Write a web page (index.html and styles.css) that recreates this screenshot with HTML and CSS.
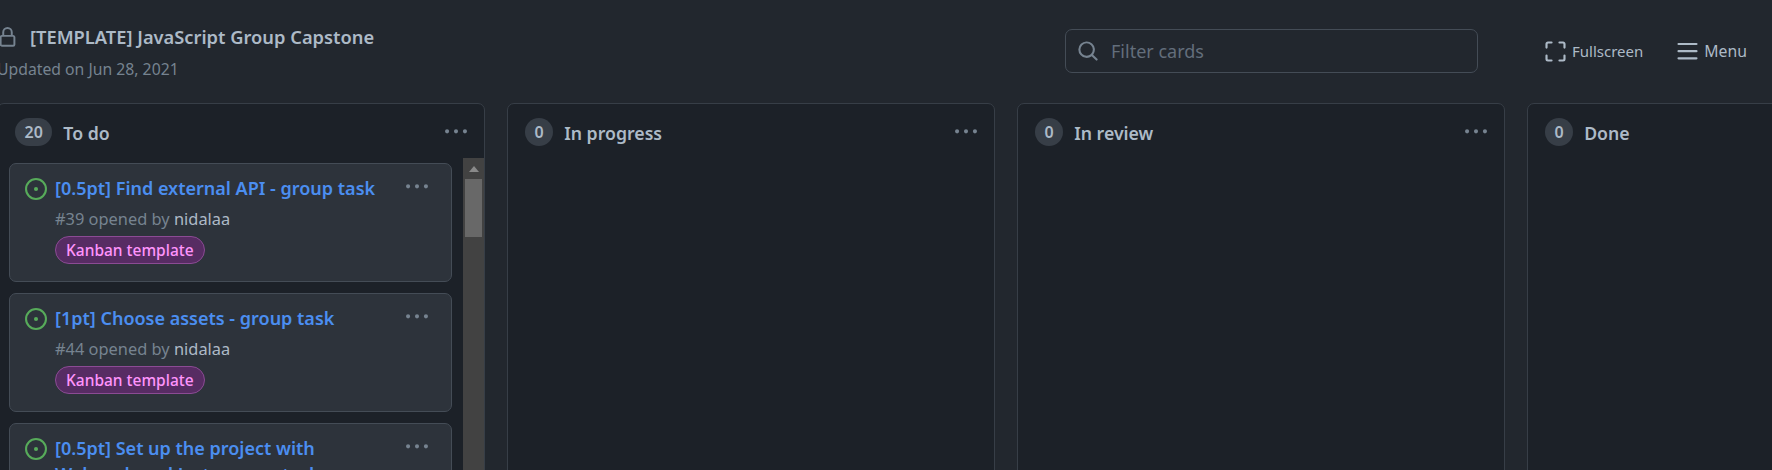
FILE: index.html
```html
<!DOCTYPE html>
<html lang="en">
<head>
<meta charset="utf-8">
<title>[TEMPLATE] JavaScript Group Capstone</title>
<link rel="stylesheet" href="styles.css">
</head>
<body>
<svg class="defs" aria-hidden="true">
  <symbol id="i-lock" viewBox="0 0 16 16"><path d="M4 4a4 4 0 0 1 8 0v2h.25c.966 0 1.75.784 1.75 1.75v5.5A1.75 1.75 0 0 1 12.25 15h-8.5A1.75 1.75 0 0 1 2 13.25v-5.5C2 6.784 2.784 6 3.75 6H4Zm8.25 3.5h-8.5a.25.25 0 0 0-.25.25v5.5c0 .138.112.25.25.25h8.5a.25.25 0 0 0 .25-.25v-5.5a.25.25 0 0 0-.25-.25ZM10.5 6V4a2.5 2.5 0 1 0-5 0v2Z"/></symbol>
  <symbol id="i-search" viewBox="0 0 16 16"><path d="M10.68 11.74a6 6 0 0 1-7.922-8.982 6 6 0 0 1 8.982 7.922l3.04 3.04a.749.749 0 0 1-.326 1.275.749.749 0 0 1-.734-.215ZM11.5 7a4.499 4.499 0 1 0-8.997 0A4.499 4.499 0 0 0 11.5 7Z"/></symbol>
  <symbol id="i-kebab" viewBox="0 0 16 16"><path d="M8 9a1.5 1.5 0 1 0 0-3 1.5 1.5 0 0 0 0 3ZM1.5 9a1.5 1.5 0 1 0 0-3 1.5 1.5 0 0 0 0 3Zm13 0a1.5 1.5 0 1 0 0-3 1.5 1.5 0 0 0 0 3Z"/></symbol>
  <symbol id="i-issue" viewBox="0 0 16 16"><path d="M8 9.5a1.5 1.5 0 1 0 0-3 1.5 1.5 0 0 0 0 3Z"/><path d="M8 0a8 8 0 1 1 0 16A8 8 0 0 1 8 0ZM1.5 8a6.5 6.5 0 1 0 13 0 6.5 6.5 0 0 0-13 0Z"/></symbol>
  <symbol id="i-full" viewBox="0 0 16 16"><path d="M1.75 10a.75.75 0 0 1 .75.75v2.5c0 .138.112.25.25.25h2.5a.75.75 0 0 1 0 1.5h-2.5A1.75 1.75 0 0 1 1 13.25v-2.5a.75.75 0 0 1 .75-.75Zm12.5 0a.75.75 0 0 1 .75.75v2.5A1.75 1.75 0 0 1 13.25 15h-2.5a.75.75 0 0 1 0-1.5h2.5a.25.25 0 0 0 .25-.25v-2.5a.75.75 0 0 1 .75-.75ZM2.75 2.5a.25.25 0 0 0-.25.25v2.5a.75.75 0 0 1-1.5 0v-2.5C1 1.784 1.784 1 2.75 1h2.5a.75.75 0 0 1 0 1.5ZM10 1.75a.75.75 0 0 1 .75-.75h2.5c.966 0 1.75.784 1.75 1.75v2.5a.75.75 0 0 1-1.5 0v-2.5a.25.25 0 0 0-.25-.25h-2.5a.75.75 0 0 1-.75-.75Z"/></symbol>
  <symbol id="i-menu" viewBox="0 0 16 16"><path d="M1 2.75A.75.75 0 0 1 1.75 2h12.5a.75.75 0 0 1 0 1.5H1.75A.75.75 0 0 1 1 2.75Zm0 5A.75.75 0 0 1 1.75 7h12.5a.75.75 0 0 1 0 1.5H1.75A.75.75 0 0 1 1 7.75ZM1.75 12h12.5a.75.75 0 0 1 0 1.5H1.75a.75.75 0 0 1 0-1.5Z"/></symbol>
</svg>
<div class="page">
  <header class="top">
    <div class="info">
      <div class="title-row">
        <svg class="ico ico-lock"><use href="#i-lock"/></svg>
        <span class="project-title">[TEMPLATE] JavaScript Group Capstone</span>
      </div>
      <div class="updated">Updated on Jun 28, 2021</div>
    </div>
    <div class="search">
      <svg class="ico ico-search"><use href="#i-search"/></svg>
      <span class="search-ph">Filter cards</span>
    </div>
    <div class="action action-full">
      <svg class="ico ico-action"><use href="#i-full"/></svg>
      <span>Fullscreen</span>
    </div>
    <div class="action action-menu">
      <svg class="ico ico-action"><use href="#i-menu"/></svg>
      <span>Menu</span>
    </div>
  </header>
  <main class="board">
    <section class="column">
      <div class="col-head">
        <span class="count">20</span>
        <span class="col-name">To do</span>
        <svg class="ico kebab"><use href="#i-kebab"/></svg>
      </div>
      <div class="col-body">
        <div class="cards">
          <article class="card">
            <svg class="ico ico-issue"><use href="#i-issue"/></svg>
            <div class="card-main">
              <a class="card-title">[0.5pt] Find external API - group task</a>
              <div class="meta">#39 opened by <span class="author">nidalaa</span></div>
              <span class="label">Kanban template</span>
            </div>
            <svg class="ico kebab kebab-card"><use href="#i-kebab"/></svg>
          </article>
          <article class="card">
            <svg class="ico ico-issue"><use href="#i-issue"/></svg>
            <div class="card-main">
              <a class="card-title">[1pt] Choose assets - group task</a>
              <div class="meta">#44 opened by <span class="author">nidalaa</span></div>
              <span class="label">Kanban template</span>
            </div>
            <svg class="ico kebab kebab-card"><use href="#i-kebab"/></svg>
          </article>
          <article class="card card-tall">
            <svg class="ico ico-issue"><use href="#i-issue"/></svg>
            <div class="card-main">
              <a class="card-title">[0.5pt] Set up the project with Webpack and Jest - group task</a>
              <div class="meta">#40 opened by <span class="author">nidalaa</span></div>
              <span class="label">Kanban template</span>
            </div>
            <svg class="ico kebab kebab-card"><use href="#i-kebab"/></svg>
          </article>
        </div>
        <div class="scrollbar">
          <div class="arrow"></div>
          <div class="thumb"></div>
        </div>
      </div>
    </section>
    <section class="column">
      <div class="col-head">
        <span class="count">0</span>
        <span class="col-name">In progress</span>
        <svg class="ico kebab"><use href="#i-kebab"/></svg>
      </div>
    </section>
    <section class="column">
      <div class="col-head">
        <span class="count">0</span>
        <span class="col-name">In review</span>
        <svg class="ico kebab"><use href="#i-kebab"/></svg>
      </div>
    </section>
    <section class="column">
      <div class="col-head">
        <span class="count">0</span>
        <span class="col-name">Done</span>
        <svg class="ico kebab"><use href="#i-kebab"/></svg>
      </div>
    </section>
  </main>
</div>
</body>
</html>
```
FILE: styles.css
```css
* { box-sizing: border-box; }
html, body { margin: 0; height: 100%; }
body {
  background: #22272e;
  color: #adbac7;
  font-family: "Noto Sans", "Open Sans", sans-serif;
  overflow: hidden;
}
.defs { width: 0; height: 0; display: block; }
.ico { fill: currentColor; flex: none; display: block; }
.page { width: 1772px; height: 470px; overflow: hidden; }

.top { height: 103px; display: flex; margin-left: -3px; width: 1775px; }
.info { width: 1068px; padding-top: 24px; }
.title-row { display: flex; align-items: center; height: 26px; }
.ico-lock { width: 21px; height: 21px; color: #768390; margin-right: 12px; }
.project-title { font-size: 18.3px; font-weight: 600; line-height: 26px; white-space: nowrap; }
.updated { font-size: 15.75px; line-height: 24px; color: #768390; margin-top: 7px; white-space: nowrap; }

.search {
  width: 413px; height: 44px; margin-top: 29px;
  border: 1px solid #444c56; border-radius: 7px;
  display: flex; align-items: center; padding-left: 11px;
  color: #768390;
}
.ico-search { width: 22px; height: 22px; margin-right: 12px; }
.search-ph { font-size: 18px; color: #636e7b; }

.action { display: flex; align-items: center; height: 44px; margin-top: 29px; font-size: 15px; }
.action-full { margin-left: 66px; }
.action-menu { margin-left: 33px; font-size: 15.75px; }
.ico-action { width: 23px; height: 23px; margin-right: 5px; color: #adbac7; }

.board { display: flex; gap: 22px; margin-left: -3px; width: 2200px; }
.column {
  width: 488px; height: 420px; flex: none;
  background: #1c2128; border: 1px solid #373e47; border-radius: 7px;
}
.col-head { height: 54px; display: flex; align-items: flex-start; padding: 14px 17px 0 17px; }
.count {
  min-width: 28px; height: 28px; padding: 0 9.5px; border-radius: 14px;
  background: #373e47; color: #adbac7;
  font-size: 16px; font-weight: 600; line-height: 28px; text-align: center;
}
.col-name { font-size: 17.7px; font-weight: 600; line-height: 30px; margin-left: 11px; }
.kebab { width: 22px; height: 22px; margin-left: auto; color: #768390; margin-top: 3px; }

.col-body { display: flex; }
.cards { width: 465px; padding-left: 11px; padding-top: 5px; }
.scrollbar { width: 21px; height: 320px; background: #424242; padding: 8px 2px 0 2px; }
.arrow {
  width: 0; height: 0; margin: 0 auto 7px;
  border-left: 5px solid transparent; border-right: 5px solid transparent;
  border-bottom: 6px solid #8a8a8a;
}
.thumb { width: 17px; height: 58px; background: #686868; }

.card {
  width: 443px; height: 119px; margin-bottom: 11px; overflow: hidden;
  background: #2d333b; border: 1px solid #444c56; border-radius: 7px;
  display: flex; padding: 14px 23px 0 15px;
}
.card-tall { height: 160px; }
.ico-issue { width: 22px; height: 22px; color: #57ab5a; margin-right: 8px; }
.card-main { width: 336px; }
.card-title { display: block; font-size: 18px; font-weight: 600; line-height: 26px; color: #4b8ef0; margin-top: -3px; }
.meta { font-size: 16.4px; line-height: 24px; color: #768390; margin-top: 6px; white-space: nowrap; }
.author { color: #adbac7; }
.label {
  display: inline-block; height: 28px; margin-top: 5px; padding: 0 10px;
  background: #572c63; border: 1px solid #8b4b94; border-radius: 14px;
  color: #ff94fc; font-size: 15.5px; font-weight: 500; line-height: 26px; white-space: nowrap;
}
.kebab-card { margin-top: -2px; }
```
